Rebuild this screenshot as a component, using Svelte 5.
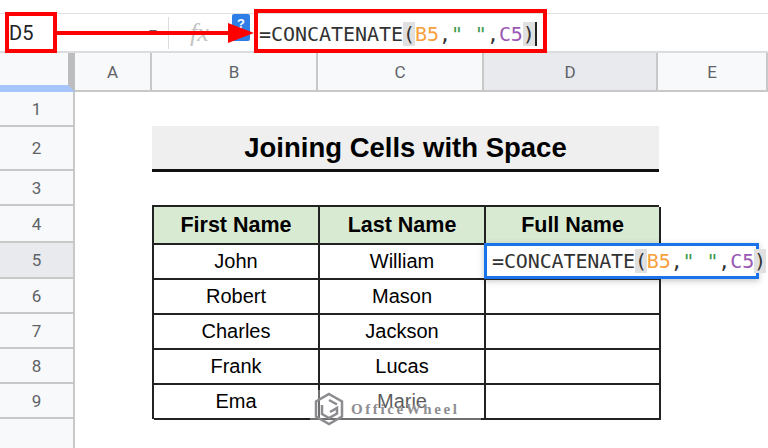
<script>
  const columns = ["A", "B", "C", "D", "E"];
  const rowNumbers = [1, 2, 3, 4, 5, 6, 7, 8, 9];
  const people = [
    ["John", "William"],
    ["Robert", "Mason"],
    ["Charles", "Jackson"],
    ["Frank", "Lucas"],
    ["Ema", "Marie"],
  ];
</script>

{#snippet formula()}
  <span>=CONCATENATE</span><span class="paren">(</span><span class="ref-b">B5</span><span>,</span><span class="str">"&nbsp;"</span><span>,</span><span class="ref-c">C5</span><span class="paren">)</span>
{/snippet}

<div class="page">
  <div class="top-gap"></div>

  <div class="formula-bar">
    <div class="name-box">D5</div>
    <svg class="caret" width="8" height="5" viewBox="0 0 8 5" aria-hidden="true"><path d="M0 0h8L4 5z" fill="#666" /></svg>
    <div class="divider"></div>
    <span class="fx">fx</span>
    <div class="help">?</div>
    <div class="formula-text">{@render formula()}<span class="cursor"></span></div>
  </div>

  <div class="sheet">
    <div class="corner"></div>
    {#each columns as col}
      <div class="col-head" class:active={col === "D"}>{col}</div>
    {/each}

    <div class="row-heads">
      {#each rowNumbers as n}
        <div class="row-head r{n}" class:active={n === 5}>{n}</div>
      {/each}
      <div class="row-head rest"></div>
    </div>

    <div class="canvas">
      <div class="title">Joining Cells with Space</div>
      <div class="table">
        <div class="cell head">First Name</div>
        <div class="cell head">Last Name</div>
        <div class="cell head">Full Name</div>
        {#each people as p}
          <div class="cell">{p[0]}</div>
          <div class="cell">{p[1]}</div>
          <div class="cell"></div>
        {/each}
      </div>
    </div>
  </div>

  <!-- annotations on top of the screenshot -->
  <div class="red-box name-mark"></div>
  <div class="red-box formula-mark"></div>
  <svg class="arrow" width="200" height="24" viewBox="0 0 200 24" aria-hidden="true">
    <rect x="0" y="10" width="172" height="4" fill="#f00" />
    <path d="M172 2 L198 12 L172 22z" fill="#f00" />
  </svg>

  <div class="editor">{@render formula()}</div>

  <div class="watermark">
    <svg width="30" height="34" viewBox="0 0 30 34" aria-hidden="true">
      <path d="M15 2 L28 9.5 V24.5 L15 32 L2 24.5 V9.5z M15 8 L23 12.5 M8 13 V22 L15 26 L23 21.500 V16 L16 20" fill="none" stroke="#8b8b90" stroke-width="2.500" />
    </svg>
    <span>OfficeWheel</span>
  </div>
</div>

<style>
  :global(body) {
    margin: 0;
    background: #fff;
  }

  .page {
    position: relative;
    width: 768px;
    height: 448px;
    overflow: hidden;
    font-family: "Liberation Sans", Arial, sans-serif;
    color: #000;
  }

  .top-gap {
    height: 13px;
    border-bottom: 1px solid #e0e0e0;
    box-sizing: border-box;
    height: 14px;
  }

  .formula-bar {
    height: 39px;
    box-sizing: border-box;
    border-bottom: 2px solid #dadce0;
    display: flex;
    align-items: center;
  }

  .name-box {
    width: 49px;
    margin-left: 9px;
    font-size: 20px;
    color: #202124;
    font-family: Roboto, "Liberation Sans", sans-serif;
  }

  .caret {
    margin-left: 91px;
  }

  .divider {
    width: 1px;
    height: 32px;
    margin-left: 11px;
    background: #dadce0;
  }

  .fx {
    margin-left: 21px;
    width: 41px;
    font-family: "Liberation Serif", serif;
    font-style: italic;
    font-size: 26px;
    color: #c4c4c4;
  }

  .help {
    position: absolute;
    left: 232px;
    top: 14px;
    width: 18px;
    height: 27px;
    background: #2f7ee8;
    border-radius: 2px;
    color: #fff;
    font-size: 13px;
    font-weight: 700;
    text-align: center;
    line-height: 20px;
  }

  .formula-text {
    position: absolute;
    left: 259px;
    top: 20px;
    display: flex;
    align-items: center;
    height: 27px;
    white-space: pre;
    font-family: "DejaVu Sans Mono", "Liberation Mono", monospace;
    font-size: 20px;
    letter-spacing: -0.05px;
    color: #333;
  }

  .paren {
    background: #e0e0e0;
  }

  .ref-b {
    color: #f7a03c;
  }

  .ref-c {
    color: #9b59b6;
  }

  .str {
    color: #3c9a4a;
  }

  .cursor {
    display: inline-block;
    width: 2px;
    height: 24px;
    background: #222;
  }

  .sheet {
    display: grid;
    grid-template-columns: 75px 77px 166px 166px 174px 110px;
    grid-template-rows: 40px 355px;
  }

  .corner {
    box-sizing: border-box;
    background: #f8f9fa;
    border-right: 7px solid #bdbdbd;
    border-bottom: 7px solid #a6c5fa;
    height: 39px;
    position: relative;
    border-image: none;
  }

  .col-head {
    box-sizing: border-box;
    height: 39px;
    background: #f8f9fa;
    border-right: 2px solid #c8c8c8;
    border-bottom: 2px solid #c8c8c8;
    display: flex;
    align-items: center;
    justify-content: center;
    font-family: Roboto, "Liberation Sans", sans-serif;
    font-size: 17px;
    color: #5f6368;
  }

  .col-head.active {
    background: #e8eaed;
  }

  .row-heads {
    grid-column: 1;
    display: flex;
    flex-direction: column;
    margin-top: -1px;
  }

  .row-head {
    box-sizing: border-box;
    flex: none;
    background: #f8f9fa;
    border-right: 2px solid #c8c8c8;
    border-bottom: 2px solid #c8c8c8;
    display: flex;
    align-items: center;
    justify-content: center;
    font-family: Roboto, "Liberation Sans", sans-serif;
    font-size: 17px;
    color: #5f6368;
    height: 35px;
  }

  .row-head.active {
    background: #e8eaed;
  }

  .r2 { height: 44px; }
  .r3 { height: 35px; }
  .r4 { height: 37px; }
  .r5 { height: 36px; }
  .r6 { height: 35px; }
  .rest { height: 40px; }

  .canvas {
    grid-column: 2 / -1;
    padding-top: 34px;
    margin-top: -1px;
    padding-left: 77px;
  }

  .title {
    box-sizing: border-box;
    width: 507px;
    height: 46px;
    background: #efefef;
    border-bottom: 3px solid #111;
    display: flex;
    align-items: center;
    justify-content: center;
    font-size: 27.500px;
    font-weight: 700;
  }

  .table {
    margin-top: 33px;
    width: 507px;
    display: grid;
    grid-template-columns: 166px 166px 175px;
    grid-template-rows: 38px repeat(5, 35px);
    border-top: 2px solid #222;
    border-left: 2px solid #222;
    box-sizing: border-box;
    height: 214px;
  }

  .cell {
    box-sizing: border-box;
    border-right: 2px solid #222;
    border-bottom: 2px solid #222;
    display: flex;
    align-items: center;
    justify-content: center;
    font-size: 20px;
  }

  .cell.head {
    background: #d9ead3;
    font-weight: 700;
    font-size: 21.500px;
  }

  .red-box {
    position: absolute;
    box-sizing: border-box;
    border: 4px solid #f00;
  }

  .name-mark {
    left: 5px;
    top: 12px;
    width: 52px;
    height: 41px;
  }

  .formula-mark {
    left: 254px;
    top: 9px;
    width: 293px;
    height: 44px;
  }

  .arrow {
    position: absolute;
    left: 56px;
    top: 21px;
  }

  .editor {
    position: absolute;
    left: 484px;
    top: 243px;
    box-sizing: border-box;
    width: 275px;
    height: 36px;
    padding-left: 5px;
    display: flex;
    align-items: center;
    white-space: pre;
    background: #fff;
    border: 3px solid #1a73e8;
    box-shadow: 0 2px 6px rgba(60, 64, 67, 0.3);
    font-family: "DejaVu Sans Mono", "Liberation Mono", monospace;
    font-size: 20px;
    letter-spacing: -0.13px;
    color: #333;
  }

  .watermark {
    position: absolute;
    left: 310px;
    top: 390px;
    width: 167px;
    height: 38px;
    display: flex;
    align-items: center;
    gap: 7px;
    padding-left: 4px;
    background: linear-gradient(rgba(255, 255, 255, 0.35), rgba(255, 255, 255, 0.35));
    color: #8e8e92;
    font-family: "Liberation Serif", serif;
    font-size: 15px;
    font-weight: 700;
    letter-spacing: 2.600px;
  }
</style>
